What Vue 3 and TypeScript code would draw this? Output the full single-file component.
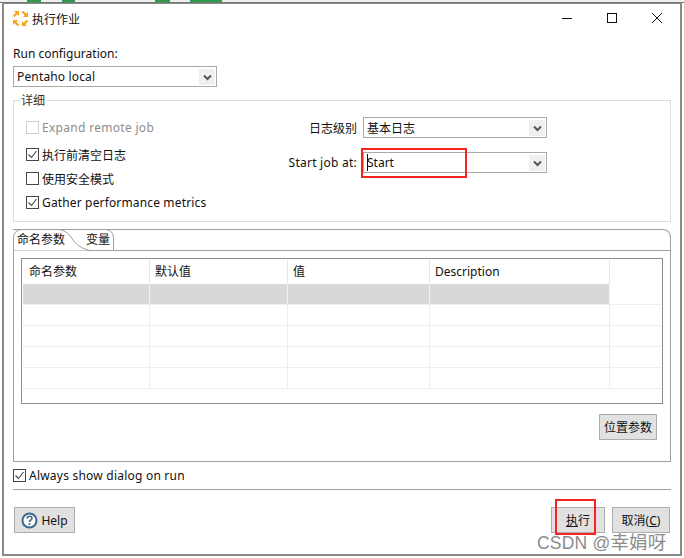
<script setup lang="ts">
interface Check { label: string; checked: boolean; latin?: boolean }
const checks: Check[] = [
  { label: '执行前清空日志', checked: true },
  { label: '使用安全模式', checked: false },
  { label: 'Gather performance metrics', checked: true, latin: true },
]
const columns = ['命名参数', '默认值', '值', 'Description', '']
const rows = [0, 1, 2, 3, 4]
const blobs = [
  { gap: 27, width: 14 },
  { gap: 21, width: 13 },
  { gap: 80, width: 15 },
  { gap: 20, width: 32 },
]
</script>

<template>
  <div class="page">
    <div class="backdrop">
      <i v-for="b in blobs" :key="b.gap" class="g" :style="{ marginLeft: b.gap + 'px', width: b.width + 'px' }" />
    </div>
    <div class="window">
      <header class="titlebar">
        <svg class="logo" width="17" height="17" viewBox="0 0 17 17">
          <g fill="#f9a11b">
            <path d="M7 1v5L5.300 4.300 2.300 7.300 0.800 5.800 3.800 2.800 2 1z" />
            <path d="M16 7h-5l1.700-1.700-3-3L11.200 0.800l3 3L16 2z" />
            <path d="M10 16v-5l1.700 1.700 3-3 1.500 1.500-3 3L15 16z" />
            <path d="M1 10h5L4.300 11.700l3 3-1.500 1.500-3-3L1 15z" />
          </g>
        </svg>
        <span class="title">执行作业</span>
        <div class="controls">
          <svg width="12" height="12" viewBox="0 0 12 12"><path d="M1 6.500h10" stroke="#111" fill="none" /></svg>
          <svg width="12" height="12" viewBox="0 0 12 12"><rect x="1.500" y="1.500" width="9" height="9" stroke="#111" fill="none" /></svg>
          <svg width="12" height="12" viewBox="0 0 12 12"><path d="M1 1l10 10M11 1L1 11" stroke="#111" fill="none" /></svg>
        </div>
      </header>

      <div class="body">
        <div class="run-label">Run configuration:</div>
        <div class="combo run-combo">
          <span class="latin">Pentaho local</span>
          <span class="arrow"><svg width="9" height="7" viewBox="0 0 9 7"><path d="M1 1.500l3.500 3.500L8 1.500" stroke="#555" stroke-width="2" fill="none" /></svg></span>
        </div>

        <fieldset class="details">
          <legend>详细</legend>
          <div class="details-grid">
            <div class="left-col">
              <label class="check disabled"><span class="box" /><span class="expand">Expand remote job</span></label>
              <div class="check-stack">
                <label v-for="c in checks" :key="c.label" class="check">
                  <span class="box">
                    <svg v-if="c.checked" width="11" height="11" viewBox="0 0 11 11"><path d="M1.500 5.500l3 3 5-6.500" stroke="#444" stroke-width="1.100" fill="none" /></svg>
                  </span>
                  <span :class="{ latin: c.latin }">{{ c.label }}</span>
                </label>
              </div>
            </div>
            <div class="right-col">
              <div class="field">
                <span class="field-label">日志级别</span>
                <div class="combo wide">
                  <span>基本日志</span>
                  <span class="arrow"><svg width="9" height="7" viewBox="0 0 9 7"><path d="M1 1.500l3.500 3.500L8 1.500" stroke="#555" stroke-width="2" fill="none" /></svg></span>
                </div>
              </div>
              <div class="field">
                <span class="field-label start-label">Start job at:</span>
                <div class="combo wide">
                  <span class="caret" /><span>Start</span>
                  <span class="arrow"><svg width="9" height="7" viewBox="0 0 9 7"><path d="M1 1.500l3.500 3.500L8 1.500" stroke="#555" stroke-width="2" fill="none" /></svg></span>
                </div>
              </div>
            </div>
          </div>
        </fieldset>

        <section class="tabs">
          <div class="tab-strip">
            <svg class="tab-shape" width="115" height="22" viewBox="0 0 115 22">
              <path d="M50 0.500H93Q100 1 100.500 9V21.500H77" fill="#fff" stroke="#a0a0a0" />
              <path d="M0.500 22V9Q0.500 1 9 0.500H45Q53 1 58 8Q64 19 77 21.500H0.500" fill="#fff" stroke="none" />
              <path d="M0.500 22V9Q0.500 1 9 0.500H45Q53 1 58 8Q64 19 77 21.500" fill="none" stroke="#a0a0a0" />
            </svg>
            <span class="tab-label first">命名参数</span>
            <span class="tab-label second">变量</span>
          </div>
          <div class="tab-body">
            <div class="table">
              <div class="thead">
                <div v-for="c in columns" :key="c" class="th">{{ c }}</div>
              </div>
              <div v-for="r in rows" :key="r" class="tr" :class="{ selected: r === 0 }">
                <div v-for="c in columns" :key="c" class="td" />
              </div>
            </div>
            <div class="tab-actions">
              <button class="btn pos">位置参数</button>
            </div>
          </div>
        </section>

        <label class="check always">
          <span class="box">
            <svg width="11" height="11" viewBox="0 0 11 11"><path d="M1.500 5.500l3 3 5-6.500" stroke="#444" stroke-width="1.100" fill="none" /></svg>
          </span>
          <span class="always-text">Always show dialog on run</span>
        </label>
        <div class="rule" />

        <footer class="footer">
          <button class="btn help">
            <svg width="17" height="17" viewBox="0 0 17 17">
              <circle cx="8.500" cy="8.500" r="7" fill="#fff" stroke="#3f6a8c" stroke-width="2" />
              <path d="M6 6.600Q6.200 4.300 8.500 4.300Q11 4.300 11 6.300Q11 7.600 9.500 8.300Q8.500 8.800 8.500 10" fill="none" stroke="#3f6a8c" stroke-width="1.600" />
              <rect x="7.600" y="11.200" width="1.800" height="1.800" fill="#3f6a8c" />
            </svg>
            <span>Help</span>
          </button>
          <div class="footer-right">
            <button class="btn run"><u>执</u>行</button>
            <button class="btn cancel">取消(<u>C</u>)</button>
          </div>
        </footer>
      </div>

      <div class="mark mark-start" />
      <div class="mark mark-run" />
      <div class="watermark">CSDN @<span class="wm-cjk">幸娟呀</span></div>
    </div>
  </div>
</template>

<style>
html, body { margin: 0; background: #fff; }
</style>

<style scoped>
.page {
  width: 684px;
  height: 558px;
  overflow: hidden;
  background: #fff;
  font-family: "Noto Sans", "Noto Sans CJK SC", sans-serif;
  font-size: 12px;
  color: #111;
  display: flex;
  flex-direction: column;
}
.backdrop {
  box-sizing: border-box;
  height: 3px;
  flex: none;
  display: flex;
  background: #f0f0f0;
  border-bottom: 1px solid #6f7a72;
}
.g { display: block; height: 2px; background: #2e9a4a; }
.window {
  position: relative;
  box-sizing: border-box;
  width: 680px;
  height: 553px;
  margin-left: 2px;
  border: 1px solid #8a8a8a;
  border-width: 1px 2px 2px 2px;
  background: #fff;
  flex: none;
}
.titlebar {
  display: flex;
  align-items: center;
  height: 29px;
  padding-left: 8px;
}
.logo { flex: none; }
.title { margin-left: 3px; font-size: 12px; }
.controls {
  margin-left: auto;
  display: flex;
  gap: 33px;
  padding-right: 17px;
  margin-top: -1px;
}
.body { padding: 0 8px 0 9px; }
.latin { letter-spacing: 0.15px; }
.always-text { letter-spacing: 0.22px; }
.expand { letter-spacing: 0.3px; }
.run-label { margin-top: 12px; height: 17px; line-height: 17px; }
.combo {
  box-sizing: border-box;
  height: 21px;
  border: 1px solid #a9a9a9;
  display: flex;
  align-items: center;
  padding-left: 3px;
  background: #fff;
  position: relative;
}
.run-combo { width: 204px; margin-top: 4px; margin-left: 0; }
.arrow {
  position: absolute;
  right: 1px;
  top: 2px;
  width: 16px;
  height: 16px;
  background: #f0f0f0;
  display: flex;
  align-items: center;
  justify-content: center;
}
.details {
  box-sizing: border-box;
  margin: 5px 0 0;
  padding: 0;
  width: 658px;
  height: 130px;
  border: 1px solid #dcdcdc;
}
.details legend {
  margin-left: 7px;
  padding: 0 1px;
  font-size: 12px;
  line-height: 16px;
  color: #333;
  position: relative;
  left: -1px;
  top: 1px;
}
.details-grid {
  display: flex;
  padding: 11px 0 0 12px;
}
.left-col { width: 260px; flex: none; }
.check {
  display: flex;
  align-items: center;
  gap: 3px;
  height: 17px;
}
.check.disabled { color: #8d8d8d; margin-bottom: 10px; }
.check-stack { display: flex; flex-direction: column; gap: 7px; }
.box {
  box-sizing: border-box;
  width: 13px;
  height: 13px;
  border: 1px solid #444;
  background: #fff;
  display: flex;
  align-items: center;
  justify-content: center;
  flex: none;
}
.disabled .box { border-color: #cfcfcf; }
.right-col { flex: none; display: flex; flex-direction: column; gap: 14px; margin-top: -2px; }
.field { display: flex; align-items: center; justify-content: flex-end; width: 261px; gap: 6px; }
.field-label { white-space: nowrap; }
.start-label { letter-spacing: 0.25px; }
.wide { width: 184px; flex: none; }
.caret { width: 1px; height: 17px; background: #111; margin-right: -1px; flex: none; }
.tabs { margin-top: 7px; width: 658px; position: relative; }
.tab-strip {
  box-sizing: border-box;
  height: 22px;
  border: 1px solid #a0a0a0;
  border-radius: 0 8px 0 0;
  border-left: none;
  position: relative;
}
.tab-shape { position: absolute; left: 0; top: -1px; }
.tab-label { position: absolute; top: 1px; line-height: 18px; }
.first { left: 4px; }
.second { left: 73px; }
.tab-body {
  box-sizing: border-box;
  height: 211px;
  border: 1px solid #a0a0a0;
  border-top: none;
  padding: 7px 7px 0;
}
.table {
  box-sizing: border-box;
  width: 642px;
  height: 146px;
  border: 1px solid #8a8d91;
  padding: 1px;
  overflow: hidden;
}
.thead, .tr {
  display: grid;
  grid-template-columns: 127px 138px 142px 180px 1fr;
}
.thead { height: 24px; }
.th {
  box-sizing: border-box;
  padding-left: 5px;
  line-height: 24px;
  border-right: 1px solid #e6e6e6;
  white-space: nowrap;
}
.th:first-child { padding-left: 6px; }
.th:last-child { border-right: none; }
.tr { height: 21px; box-sizing: border-box; border-bottom: 1px solid #eeeeee; }
.td { border-right: 1px solid #e9eef6; }
.td:last-child { border-right: none; }
.tr.selected { height: 20.500px; }
.tr.selected .td { background: #d8d8d8; border-right-color: #eef1f6; }
.tr.selected .td:last-child { background: #fff; }
.tab-actions { display: flex; justify-content: flex-end; margin-top: 10px; padding-right: 6px; }
.btn {
  box-sizing: border-box;
  font: inherit;
  color: #111;
  height: 26px;
  background: #e1e1e1;
  border: 1px solid #adadad;
  padding: 0;
  display: inline-flex;
  align-items: center;
  justify-content: center;
}
.pos { width: 58px; }
.always { margin-top: 5px; height: 17px; }
.rule { height: 1px; background: #a0a0a0; margin-top: 5px; width: 658px; }
.footer { display: flex; justify-content: space-between; margin-top: 17px; width: 657px; padding-left: 1px; box-sizing: border-box; }
.help { width: 61px; gap: 3px; }
.footer-right { display: flex; gap: 7px; }
.run { width: 54px; }
.cancel { width: 58px; }
.mark {
  position: absolute;
  box-sizing: border-box;
  border: 2px solid #f5251b;
  pointer-events: none;
}
.mark-start { left: 357px; top: 144px; width: 106px; height: 30px; }
.mark-run { left: 551px; top: 495px; width: 41px; height: 36px; }
.watermark {
  position: absolute;
  left: 533px;
  top: 524px;
  font-size: 17.500px;
  color: #8c8c8c;
  white-space: nowrap;
  letter-spacing: 0.2px;
  font-family: "Liberation Sans", "Noto Sans CJK SC", sans-serif;
  text-shadow: 0 0 2px #fff;
}
.wm-cjk { font-size: 18.500px; }
</style>
